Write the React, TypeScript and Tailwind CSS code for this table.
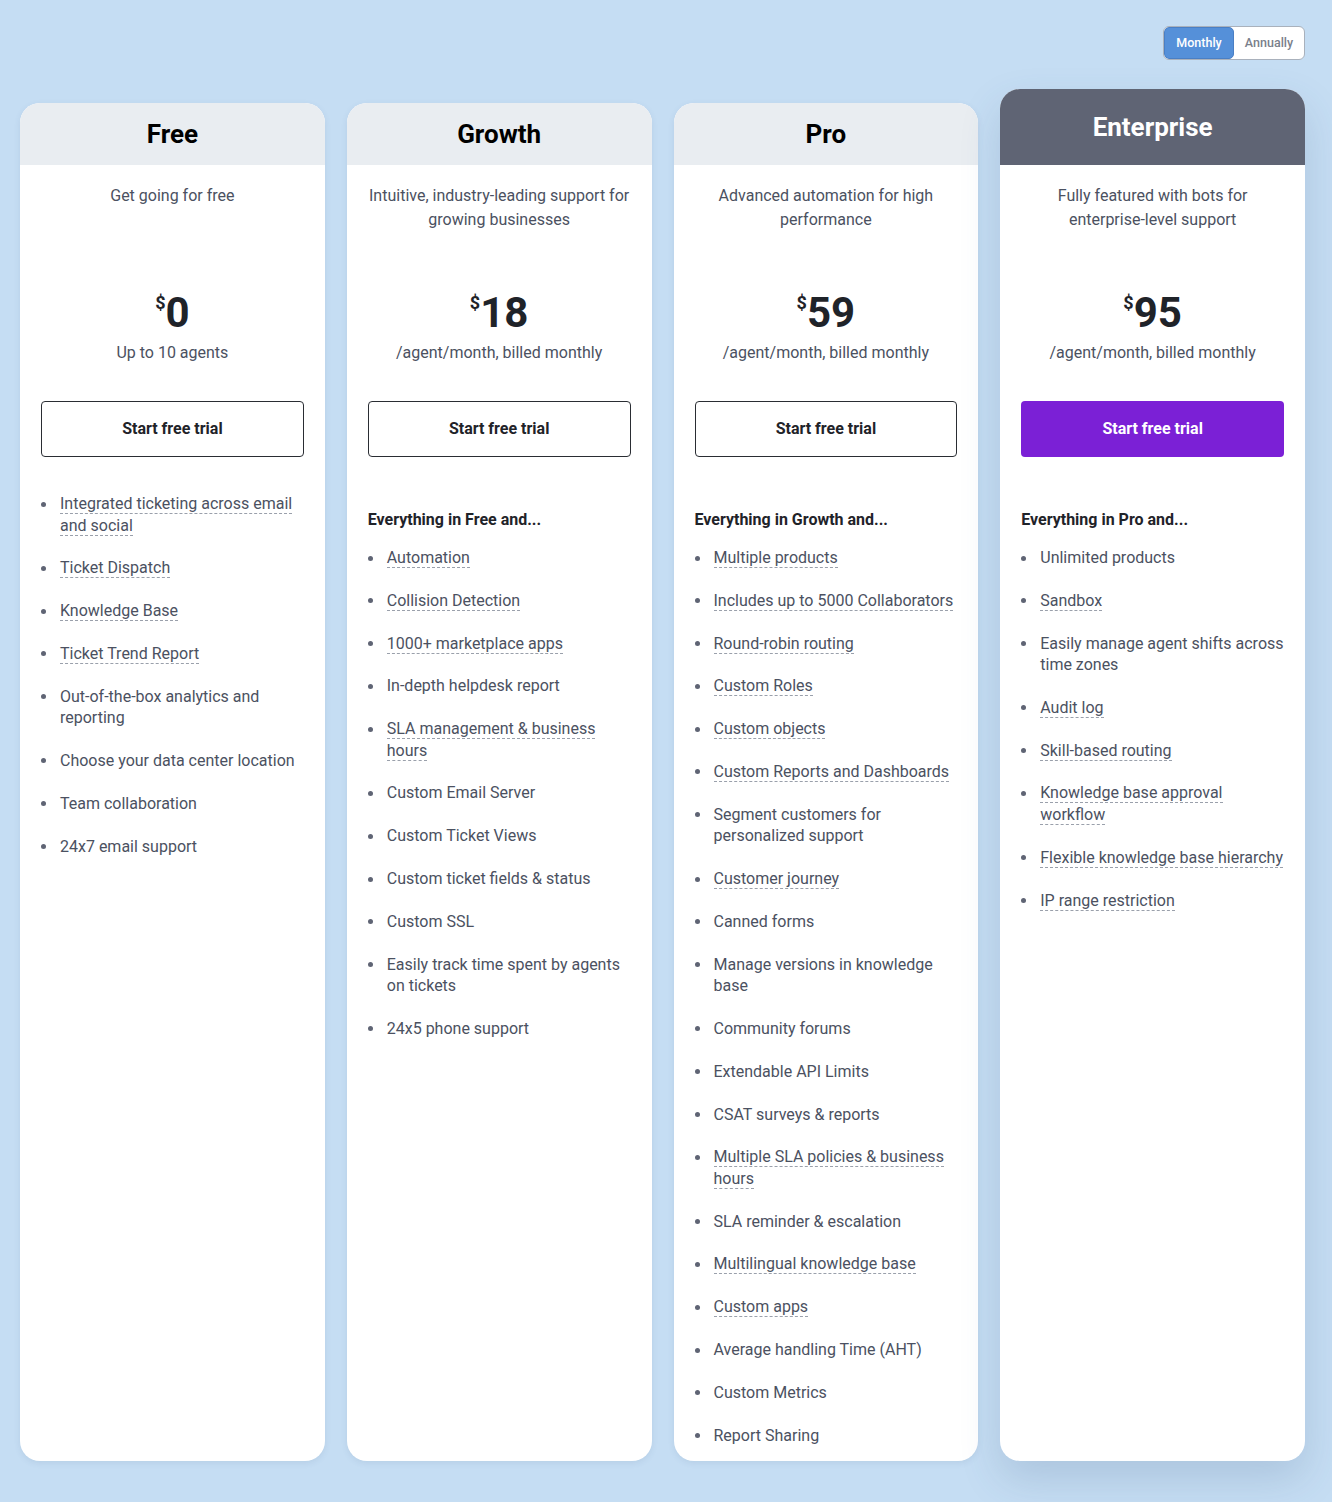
import React from 'react';

type Feature = { text: string; tip?: boolean };

type Plan = {
  name: string;
  desc: string;
  price: string;
  unit: string;
  heading?: string;
  featured?: boolean;
  features: Feature[];
};

const t = (text: string): Feature => ({ text, tip: true });
const p = (text: string): Feature => ({ text });

const plans: Plan[] = [
  {
    name: 'Free',
    desc: 'Get going for free',
    price: '0',
    unit: 'Up to 10 agents',
    features: [
      t('Integrated ticketing across email and social'),
      t('Ticket Dispatch'),
      t('Knowledge Base'),
      t('Ticket Trend Report'),
      p('Out-of-the-box analytics and reporting'),
      p('Choose your data center location'),
      p('Team collaboration'),
      p('24x7 email support'),
    ],
  },
  {
    name: 'Growth',
    desc: 'Intuitive, industry-leading support for growing businesses',
    price: '18',
    unit: '/agent/month, billed monthly',
    heading: 'Everything in Free and...',
    features: [
      t('Automation'),
      t('Collision Detection'),
      t('1000+ marketplace apps'),
      p('In-depth helpdesk report'),
      t('SLA management & business hours'),
      p('Custom Email Server'),
      p('Custom Ticket Views'),
      p('Custom ticket fields & status'),
      p('Custom SSL'),
      p('Easily track time spent by agents on tickets'),
      p('24x5 phone support'),
    ],
  },
  {
    name: 'Pro',
    desc: 'Advanced automation for high performance',
    price: '59',
    unit: '/agent/month, billed monthly',
    heading: 'Everything in Growth and...',
    features: [
      t('Multiple products'),
      t('Includes up to 5000 Collaborators'),
      t('Round-robin routing'),
      t('Custom Roles'),
      t('Custom objects'),
      t('Custom Reports and Dashboards'),
      p('Segment customers for personalized support'),
      t('Customer journey'),
      p('Canned forms'),
      p('Manage versions in knowledge base'),
      p('Community forums'),
      p('Extendable API Limits'),
      p('CSAT surveys & reports'),
      t('Multiple SLA policies & business hours'),
      p('SLA reminder & escalation'),
      t('Multilingual knowledge base'),
      t('Custom apps'),
      p('Average handling Time (AHT)'),
      p('Custom Metrics'),
      p('Report Sharing'),
    ],
  },
  {
    name: 'Enterprise',
    desc: 'Fully featured with bots for enterprise-level support',
    price: '95',
    unit: '/agent/month, billed monthly',
    heading: 'Everything in Pro and...',
    featured: true,
    features: [
      p('Unlimited products'),
      t('Sandbox'),
      p('Easily manage agent shifts across time zones'),
      t('Audit log'),
      t('Skill-based routing'),
      t('Knowledge base approval workflow'),
      t('Flexible knowledge base hierarchy'),
      t('IP range restriction'),
    ],
  },
];

function PlanCard({ plan }: { plan: Plan }) {
  return (
    <div
      className={
        plan.featured
          ? 'flex flex-col bg-white rounded-[20px] overflow-hidden shadow-[0_18px_40px_rgba(60,90,130,0.18)]'
          : 'flex flex-col bg-white rounded-[20px] overflow-hidden mt-[14px] shadow-[0_2px_6px_rgba(60,90,130,0.1)]'
      }
    >
      {plan.featured ? (
        <div className="h-[76px] bg-[#5f6474] flex items-center justify-center">
          <h2 className="text-[26px] font-bold text-white">{plan.name}</h2>
        </div>
      ) : (
        <div className="h-[62px] bg-[#e9edf1] flex items-center justify-center">
          <h2 className="text-[26px] font-bold text-black">{plan.name}</h2>
        </div>
      )}

      <div className="flex flex-col px-[21px] pb-[15px]">
        <p className="pt-[19px] h-[66px] text-center text-[16px] leading-[24px] text-[#4b5161]">
          {plan.desc}
        </p>

        <div className="mt-[58px] flex justify-center items-start text-[#1f2329]">
          <span className="text-[18px] font-bold leading-none mt-[5px]">$</span>
          <span className="text-[42px] font-bold leading-[48px]">{plan.price}</span>
        </div>
        <p className="mt-[4px] text-center text-[16px] leading-[24px] text-[#4b5161]">{plan.unit}</p>

        {plan.featured ? (
          <button className="mt-[36px] h-[56px] rounded-[4px] bg-[#7b20d6] text-white text-[16px] font-bold">
            Start free trial
          </button>
        ) : (
          <button className="mt-[36px] h-[56px] rounded-[4px] border border-[#2a2d33] bg-white text-[#1f2329] text-[16px] font-bold">
            Start free trial
          </button>
        )}

        {plan.heading ? (
          <>
            <p className="mt-[52px] text-[16px] leading-[22px] font-bold text-[#1f2329]">{plan.heading}</p>
            <ul className="mt-[16px] flex flex-col gap-[21.3px]">
              {plan.features.map((f) => (
                <FeatureRow key={f.text} f={f} />
              ))}
            </ul>
          </>
        ) : (
          <ul className="mt-[36px] flex flex-col gap-[21.3px]">
            {plan.features.map((f) => (
              <FeatureRow key={f.text} f={f} />
            ))}
          </ul>
        )}
      </div>
    </div>
  );
}

function FeatureRow({ f }: { f: Feature }) {
  return (
    <li className="flex items-start text-[16px] leading-[21.5px] text-[#4b5161]">
      <span className="w-[19px] shrink-0 flex pt-[8.5px]">
        <span className="w-[5px] h-[5px] rounded-full bg-[#5f6474]" />
      </span>
      <span>
        {f.tip ? (
          <span className="border-b border-dashed border-[#9aa0ab]">{f.text}</span>
        ) : (
          f.text
        )}
      </span>
    </li>
  );
}

export default function App() {
  return (
    <div className="min-h-[1502px] bg-[#c5ddf3] pl-[20px] pr-[27px] pt-[26px] pb-[41px] font-['Roboto',sans-serif]">
      <div className="flex justify-end">
        <div className="flex h-[34px] rounded-[6px] border border-[#a9b1bc] bg-white overflow-hidden text-[12.5px] font-medium">
          <button className="w-[70px] bg-[#5590d9] text-white rounded-[5px] border border-[#4a7fc4]">Monthly</button>
          <button className="w-[70px] text-[#7a808b]">Annually</button>
        </div>
      </div>

      <div className="mt-[29px] grid grid-cols-4 gap-[22px] items-stretch">
        {plans.map((plan) => (
          <PlanCard key={plan.name} plan={plan} />
        ))}
      </div>
    </div>
  );
}
